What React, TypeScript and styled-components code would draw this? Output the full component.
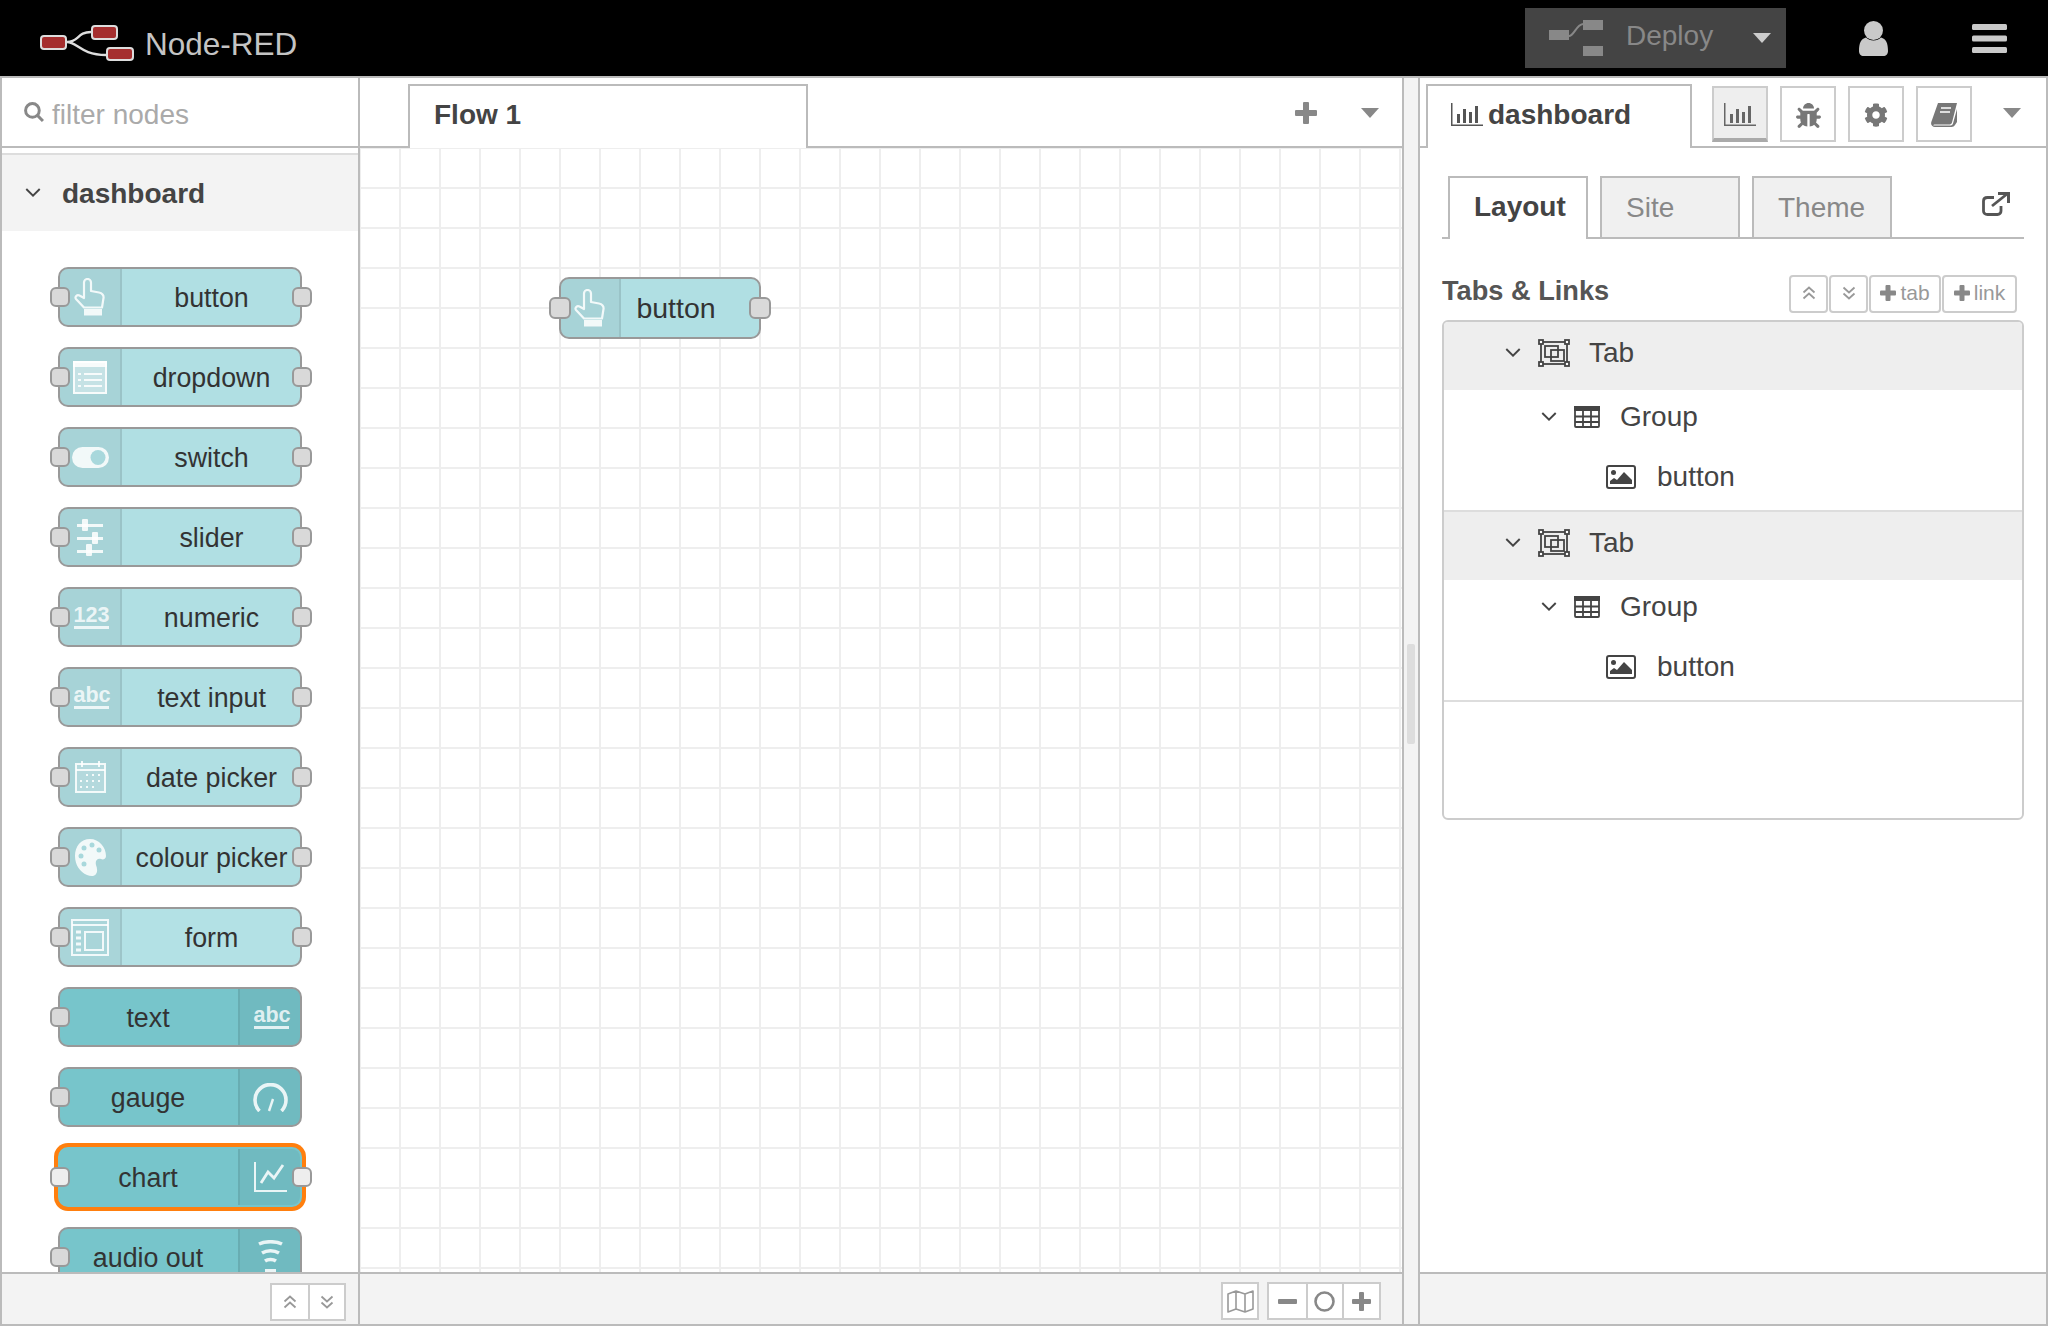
import React from 'react';
import styled, { createGlobalStyle } from 'styled-components';
import { FaBug, FaCog } from 'react-icons/fa';

const GlobalStyle = createGlobalStyle`
  html, body {
    margin: 0;
    padding: 0;
    background: #ffffff;
    font-family: "Liberation Sans", Arial, sans-serif;
  }
  * {
    box-sizing: border-box;
  }
  svg {
    display: block;
    flex: none;
  }
`;

const Page = styled.div`
  width: 2048px;
  height: 1326px;
  display: flex;
  flex-direction: column;
  overflow: hidden;
  color: #444;
`;

/* header */
const Header = styled.header`
  height: 76px;
  flex: none;
  display: flex;
  align-items: center;
  padding: 0 41px 0 40px;
  background: #000;
`;

const Brand = styled.div`
  display: flex;
  align-items: center;
  gap: 11px;
  padding-top: 10px;
  color: #c4c4c4;
  font-size: 31.5px;
`;

const BrandName = styled.span`
  padding-top: 2px;
`;

const DeployButton = styled.div`
  width: 261px;
  height: 60px;
  margin-left: auto;
  display: flex;
  align-items: center;
  padding: 0 15px 0 24px;
  background: #444;
  color: #888;
  font-size: 28px;
`;

const DeployLabel = styled.span`
  margin-left: 23px;
  padding-bottom: 4px;
`;

const DeployCaret = styled.span`
  margin-left: auto;
  width: 0;
  height: 0;
  border-left: 9px solid transparent;
  border-right: 9px solid transparent;
  border-top: 10px solid #ccc;
`;

const UserSlot = styled.div`
  margin-left: 73px;
  margin-right: 84px;
`;

/* workspace */
const Workspace = styled.div`
  flex: 1;
  min-height: 0;
  display: flex;
  border-top: 2px solid #bbb;
`;

const Sidebar = styled.aside`
  width: 360px;
  flex: none;
  display: flex;
  flex-direction: column;
  border-left: 2px solid #bbb;
  border-right: 2px solid #bbb;
`;

const FilterRow = styled.div`
  height: 70px;
  flex: none;
  display: flex;
  align-items: center;
  gap: 8px;
  padding-left: 22px;
  border-bottom: 2px solid #bbb;
  color: #aaa;
  font-size: 28px;
`;

const FilterText = styled.span`
  padding-top: 5px;
`;

const Palette = styled.div`
  flex: 1;
  min-height: 0;
  overflow: hidden;
  padding-top: 5px;
`;

const CategoryHeader = styled.div`
  height: 78px;
  display: flex;
  align-items: center;
  gap: 21px;
  padding-left: 23px;
  background: #f3f3f3;
  border-top: 2px solid #ddd;
  color: #444;
  font-size: 28px;
  font-weight: 700;
`;

const CategoryName = styled.span`
  padding-top: 2px;
`;

const NodeList = styled.div`
  display: flex;
  flex-direction: column;
  gap: 20px;
  padding: 36px 0 0 56px;
`;

const NodeBody = styled.div<{ $color: string; $selected?: boolean }>`
  position: relative;
  width: 244px;
  height: 60px;
  flex: none;
  display: flex;
  border: 2px solid ${(p) => (p.$selected ? p.$color : '#999')};
  border-radius: 10px;
  background: ${(p) => p.$color};
  box-shadow: ${(p) => (p.$selected ? '0 0 0 4px #ff7f0e' : 'none')};
  color: #333;
`;

const IconCell = styled.div<{ $right?: boolean }>`
  width: 62px;
  flex: none;
  display: flex;
  align-items: center;
  justify-content: center;
  background: rgba(0, 0, 0, 0.05);
  color: rgba(255, 255, 255, 0.85);
  border-radius: ${(p) => (p.$right ? '0 8px 8px 0' : '8px 0 0 8px')};
  ${(p) =>
    p.$right
      ? 'border-left: 2px solid rgba(0, 0, 0, 0.08);'
      : 'border-right: 2px solid rgba(0, 0, 0, 0.08);'}
`;

const NodeLabel = styled.div<{ $iconRight?: boolean }>`
  flex: 1;
  display: flex;
  align-items: center;
  justify-content: center;
  padding: 3px ${(p) => (p.$iconRight ? '2px' : '0')} 0 ${(p) => (p.$iconRight ? '0' : '1px')};
  font-size: 26.8px;
  white-space: nowrap;
`;

const Port = styled.span<{ $right?: boolean; $light?: boolean }>`
  position: absolute;
  top: 18px;
  ${(p) => (p.$right ? 'right: -12px;' : 'left: -10px;')}
  width: 20px;
  height: 20px;
  border: 2px solid #999;
  border-radius: 6px;
  background: ${(p) => (p.$light ? '#eeeeee' : '#d9d9d9')};
`;

const WordIcon = styled.span`
  display: block;
  width: 35px;
  margin-left: 2px;
  padding-bottom: 2px;
  border-bottom: 3px solid rgba(255, 255, 255, 0.8);
  color: rgba(255, 255, 255, 0.8);
  font-size: 21.5px;
  font-weight: 700;
  line-height: 18px;
  text-align: center;
`;

const SidebarFooter = styled.div`
  height: 54px;
  flex: none;
  display: flex;
  justify-content: flex-end;
  padding: 9px 12px 0 0;
  background: #f3f3f3;
  border-top: 2px solid #bbb;
  border-bottom: 2px solid #bbb;
`;

const ButtonGroup = styled.div<{ $count: number }>`
  width: ${(p) => p.$count * 38}px;
  height: 38px;
  display: grid;
  grid-template-columns: repeat(${(p) => p.$count}, 1fr);
  background: #fff;
  border: 2px solid #ccc;
`;

const GroupCell = styled.div`
  display: flex;
  align-items: center;
  justify-content: center;
  color: #888;
  & + & {
    border-left: 2px solid #ccc;
  }
`;

/* flow column */
const FlowColumn = styled.main`
  width: 1044px;
  flex: none;
  display: flex;
  flex-direction: column;
  border-right: 2px solid #bbb;
`;

const TabBar = styled.div`
  height: 70px;
  flex: none;
  display: flex;
  align-items: flex-end;
  border-bottom: 2px solid #bbb;
`;

const FlowTabBar = styled(TabBar)`
  padding: 0 17px 0 48px;
`;

const WorkTab = styled.div<{ $width: number }>`
  position: relative;
  width: ${(p) => p.$width}px;
  height: 64px;
  margin-bottom: -2px;
  display: flex;
  align-items: center;
  padding-bottom: 5px;
  background: #fff;
  border: 2px solid #bbb;
  border-bottom: none;
  color: #444;
  font-size: 28px;
  font-weight: 700;
`;

const FlowTabTitle = styled.span`
  padding-left: 24px;
`;

const BarAction = styled.div`
  width: 30px;
  height: 66px;
  display: flex;
  align-items: center;
  justify-content: center;
  color: #888;
`;

const PlusAction = styled(BarAction)`
  margin-left: auto;
  margin-right: 34px;
`;

const SmallCaret = styled.span`
  width: 0;
  height: 0;
  border-left: 9px solid transparent;
  border-right: 9px solid transparent;
  border-top: 10px solid #888;
`;

const Canvas = styled.div`
  position: relative;
  flex: 1;
  min-height: 0;
  overflow: hidden;
  background-color: #fff;
  background-image: linear-gradient(to right, #eee 2px, transparent 2px),
    linear-gradient(to bottom, #eee 2px, transparent 2px);
  background-size: 40px 40px;
  background-position: -1px -1px;
`;

const FlowNode = styled(NodeBody)`
  position: absolute;
  left: 199px;
  top: 129px;
  width: 202px;
  height: 62px;
`;

const FlowIconCell = styled(IconCell)`
  width: 60px;
`;

const FlowPort = styled(Port)`
  width: 22px;
  height: 22px;
  ${(p) => (p.$right ? 'right: -12px;' : 'left: -12px;')}
`;

const FlowLabel = styled(NodeLabel)`
  font-size: 28.5px;
  padding: 1px 28px 0 0;
`;

const FlowFooter = styled.div`
  height: 54px;
  flex: none;
  display: flex;
  justify-content: flex-end;
  gap: 8px;
  padding: 8px 21px 0 0;
  background: #f3f3f3;
  border-top: 2px solid #bbb;
  border-bottom: 2px solid #bbb;
`;

/* separator */
const Separator = styled.div`
  width: 14px;
  flex: none;
  display: flex;
  align-items: center;
  justify-content: center;
  padding-bottom: 14px;
  background: #f3f3f3;
  border-bottom: 2px solid #bbb;
`;

const SeparatorGrip = styled.span`
  width: 8px;
  height: 100px;
  background: #ddd;
  border-radius: 2px;
`;

/* right panel */
const RightPanel = styled.section`
  flex: 1;
  min-width: 0;
  display: flex;
  flex-direction: column;
  border-left: 2px solid #bbb;
  border-right: 2px solid #bbb;
`;

const InfoTabBar = styled(TabBar)`
  padding: 0 19px 0 6px;
`;

const DashboardTabTitle = styled.div`
  display: flex;
  align-items: center;
  gap: 5px;
  padding-left: 23px;
`;

const SideButtons = styled.div`
  align-self: flex-start;
  display: flex;
  gap: 12px;
  margin: 8px 0 0 20px;
`;

const SideButton = styled.div<{ $active?: boolean }>`
  width: 56px;
  height: 56px;
  display: flex;
  align-items: center;
  justify-content: center;
  padding-top: 2px;
  background: ${(p) => (p.$active ? '#eee' : '#fff')};
  border: 2px solid #ccc;
  border-bottom: ${(p) => (p.$active ? '4px solid #aaa' : '2px solid #ccc')};
  color: #777;
`;

const InfoCaret = styled(BarAction)`
  margin-left: auto;
`;

const PanelBody = styled.div`
  flex: 1;
  min-height: 0;
  padding: 28px 22px 0 22px;
`;

const SubTabs = styled.div`
  height: 63px;
  display: flex;
  align-items: flex-end;
  gap: 12px;
  padding: 0 14px 0 6px;
  border-bottom: 2px solid #bbb;
`;

const SubTab = styled.div<{ $active?: boolean }>`
  width: 140px;
  height: ${(p) => (p.$active ? '63px' : '61px')};
  margin-bottom: ${(p) => (p.$active ? '-2px' : '0')};
  display: flex;
  align-items: center;
  padding: 0 0 ${(p) => (p.$active ? '4px' : '0')} 24px;
  background: ${(p) => (p.$active ? '#fff' : '#f0f0f0')};
  border: 2px solid #bbb;
  border-bottom: none;
  color: ${(p) => (p.$active ? '#444' : '#888')};
  font-size: 28px;
  font-weight: ${(p) => (p.$active ? 700 : 400)};
`;

const ExternalLink = styled.div`
  align-self: flex-start;
  margin: 16px 0 0 auto;
  color: #555;
`;

const SectionHead = styled.div`
  height: 38px;
  margin-top: 36px;
  display: flex;
  align-items: center;
  gap: 1px;
  padding-right: 7px;
`;

const SectionTitle = styled.div`
  margin-right: auto;
  padding-bottom: 6px;
  color: #555;
  font-size: 27.2px;
  font-weight: 700;
`;

const ToolButton = styled.div<{ $width: number }>`
  width: ${(p) => p.$width}px;
  height: 38px;
  display: flex;
  align-items: center;
  justify-content: center;
  gap: 4px;
  padding-bottom: 2px;
  background: #fff;
  border: 2px solid #ccc;
  border-radius: 4px;
  color: #999;
  font-size: 21px;
`;

const TreeBox = styled.div`
  width: 582px;
  height: 500px;
  margin-top: 7px;
  overflow: hidden;
  border: 2px solid #ccc;
  border-radius: 6px;
`;

const TreeItem = styled.div`
  border-bottom: 2px solid #ddd;
`;

const TreeRow = styled.div<{ $indent: number; $height: number; $gap: number; $shaded?: boolean }>`
  height: ${(p) => p.$height}px;
  display: flex;
  align-items: center;
  padding-left: ${(p) => p.$indent}px;
  padding-bottom: ${(p) => (p.$shaded ? '7px' : '0')};
  background: ${(p) => (p.$shaded ? '#eee' : 'transparent')};
  color: #444;
  font-size: 28px;
  & > span {
    margin-left: ${(p) => p.$gap}px;
  }
`;

const TreeChevron = styled.div`
  margin-right: 17px;
  color: #444;
`;

/* drawn icons */
const LogoIcon = () => (
  <svg width="94" height="36" viewBox="0 0 94 36">
    <path d="M27 17c12 0 10-10 24-10M27 17c10 0 14 13 39 13" fill="none" stroke="#ddd" strokeWidth="2.400" />
    <rect x="1" y="11" width="25" height="13" rx="3" fill="#a52e2e" stroke="#ddd" strokeWidth="2" />
    <rect x="52" y="1" width="25" height="13" rx="3" fill="#a52e2e" stroke="#ddd" strokeWidth="2" />
    <rect x="67" y="23" width="26" height="12" rx="3" fill="#a52e2e" stroke="#ddd" strokeWidth="2" />
  </svg>
);

const DeployIcon = () => (
  <svg width="54" height="36" viewBox="0 0 54 36" fill="#888">
    <rect x="0" y="10" width="20" height="10" />
    <rect x="34" y="0" width="20" height="10" />
    <rect x="34" y="26" width="20" height="10" />
    <path d="M20 16c5 0 7-11 14-12" fill="none" stroke="#888" strokeWidth="2" />
  </svg>
);

const UserIcon = () => (
  <svg width="29" height="35" viewBox="0 0 29 35" fill="#c9c9c9">
    <circle cx="14.500" cy="9.500" r="9.500" />
    <path d="M0 30c0-8 2-12 7-13.500 2 2 4.500 3 7.500 3s5.500-1 7.500-3c5 1.500 7 5.500 7 13.500 0 3-2 5-4.500 5h-20C2 35 0 33 0 30z" />
  </svg>
);

const MenuIcon = () => (
  <svg width="35" height="29" viewBox="0 0 35 29" fill="#c9c9c9">
    <rect width="35" height="6" rx="1.500" />
    <rect y="11.500" width="35" height="6" rx="1.500" />
    <rect y="23" width="35" height="6" rx="1.500" />
  </svg>
);

const SearchIcon = () => (
  <svg width="20" height="20" viewBox="0 0 19 19" fill="none" stroke="#888" strokeWidth="2.800">
    <circle cx="8" cy="8" r="6.500" />
    <path d="M12.500 12.500l5.500 5.500" />
  </svg>
);

const Chevron = ({ size = 16 }: { size?: number }) => (
  <svg width={size} height={size * 0.6} viewBox="0 0 16 10" fill="none" stroke="currentColor" strokeWidth="2">
    <path d="M1 1l7 7 7-7" />
  </svg>
);

const DoubleChevron = ({ up }: { up?: boolean }) => (
  <svg width="14" height="14" viewBox="0 0 14 14" fill="none" stroke="#999" strokeWidth="1.800">
    <path d={up ? 'M1.500 6.500L7 1.500l5.500 5M1.500 12.500L7 7.500l5.500 5' : 'M1.500 1.500L7 6.500l5.500-5M1.500 7.500L7 12.500l5.500-5'} />
  </svg>
);

const HandIcon = () => (
  <svg width="32" height="38" viewBox="0 0 32 38" fill="none" stroke="currentColor" strokeWidth="2.200">
    <path d="M10 4.500a3.500 3.500 0 0 1 7 0V13l8 1.500c3 .6 5 3 4.500 5.500L28 29.500H10L2 21c-1.500-2 1-5 3.500-3.500L10 20z" strokeLinejoin="round" />
    <path d="M10 31h18v6.500H10z" fill="currentColor" stroke="none" />
  </svg>
);

const DropdownIcon = () => (
  <svg width="34" height="33" viewBox="0 0 34 33" fill="none" stroke="currentColor" strokeWidth="2">
    <rect x="0" y="0" width="34" height="33" fill="rgba(255,255,255,.35)" stroke="none" />
    <rect x="0" y="0" width="34" height="6" fill="currentColor" stroke="none" />
    <rect x="1" y="1" width="32" height="31" />
    <path d="M5 13h3M11 13h18M5 19h3M11 19h18M5 25h3M11 25h18" />
  </svg>
);

const SwitchIcon = () => (
  <svg width="37" height="21" viewBox="0 0 37 21">
    <rect width="37" height="21" rx="10.500" fill="currentColor" />
    <circle cx="26" cy="10.500" r="7.500" fill="#a8d8dc" />
  </svg>
);

const SliderIcon = () => (
  <svg width="26" height="37" viewBox="0 0 26 37" fill="currentColor">
    <rect y="5" width="26" height="3" />
    <rect x="5" y="0" width="6" height="12" rx="1" />
    <rect y="18" width="26" height="3" />
    <rect x="15" y="13" width="6" height="12" rx="1" />
    <rect y="31" width="26" height="3" />
    <rect x="9" y="25" width="6" height="12" rx="1" />
  </svg>
);

const CalendarIcon = () => (
  <svg width="31" height="32" viewBox="0 0 31 32" fill="none" stroke="currentColor" strokeWidth="2">
    <rect x="1" y="3" width="29" height="28" fill="rgba(255,255,255,.15)" />
    <path d="M1 9h29M7 0v6M24 0v6" />
    <path d="M11 14h2M17 14h2M23 14h2M5 20h2M11 20h2M17 20h2M23 20h2M5 26h2M11 26h2M17 26h2" />
  </svg>
);

const PaletteIcon = () => (
  <svg width="31" height="37" viewBox="0 0 31 37">
    <path d="M15 0C24 0 31 8 31 17c0 3-3 4-5 3-4-1-6 2-5 6 1 3 2 6 0 9-2 3-6 2-9 1C5 33 0 26 0 17 0 7 6 0 15 0z" fill="currentColor" />
    <g fill="#a8d8dc">
      <circle cx="6" cy="17" r="2.500" />
      <circle cx="9" cy="9" r="2.500" />
      <circle cx="17" cy="6" r="2.500" />
      <circle cx="24" cy="11" r="2.500" />
      <circle cx="9" cy="25" r="2.500" />
    </g>
  </svg>
);

const FormIcon = () => (
  <svg width="38" height="37" viewBox="0 0 38 37" fill="none" stroke="currentColor" strokeWidth="2">
    <rect x="1" y="1" width="36" height="35" />
    <path d="M1 6h36" />
    <rect x="14" y="13" width="18" height="18" />
    <path d="M5 13h5M5 19h5M5 25h5M5 31h5" strokeWidth="3" />
  </svg>
);

const GaugeIcon = () => (
  <svg width="35" height="29" viewBox="0 0 35 29" fill="none" stroke="currentColor">
    <path d="M6.500 28A15.500 15.500 0 1 1 28.500 28" strokeWidth="3.600" />
    <path d="M16 28l4-12" strokeWidth="2.400" />
  </svg>
);

const ChartLineIcon = () => (
  <svg width="33" height="30" viewBox="0 0 33 30" fill="none" stroke="currentColor" strokeWidth="2">
    <path d="M1 0v29h32" />
    <path d="M7 21l7-11 6 6 9-13" strokeWidth="2.800" />
  </svg>
);

const AudioIcon = () => (
  <svg width="25" height="34" viewBox="0 0 25 34" fill="none" stroke="currentColor" strokeWidth="3.600">
    <path d="M1 4c6-3 17-3 23 0M4 13c5-3 12-3 17 0M7 21c3-2 8-2 11 0" />
    <rect x="7" y="29" width="11" height="5" fill="currentColor" stroke="none" />
  </svg>
);

const BarsIcon = ({ color }: { color: string }) => (
  <svg width="32" height="23" viewBox="0 0 32 23" fill={color}>
    <path d="M0 0h1.500v21.500H32V23H0z" />
    <rect x="6" y="11" width="3" height="9" />
    <rect x="12" y="6" width="3" height="14" />
    <rect x="18" y="9" width="3" height="11" />
    <rect x="24" y="3" width="3" height="17" />
  </svg>
);

const BookIcon = () => (
  <svg width="26" height="24" viewBox="0 0 26 24" fill="currentColor">
    <path d="M7 0h19l-5 19.500c-.4 1.500-1.500 2-3 2H3.500c-1 0-1.400.6-1 1H19c1.500 0 2.500-.6 3-2L26 6v13l-2 3c-.7 1.300-2 2-3.500 2H4c-3 0-4.500-2.500-3.700-5z" />
    <path d="M10 5h10M9 9h10" stroke="#fff" strokeWidth="1.600" />
  </svg>
);

const ExternalIcon = () => (
  <svg width="28" height="24" viewBox="0 0 28 24" fill="none" stroke="currentColor" strokeWidth="2.800">
    <path d="M19 14v5c0 2-1.500 3.500-3.500 3.500h-10C3 22.500 1.500 21 1.500 19V9c0-2 1.500-3.500 4-3.500H12" />
    <path d="M10 14L25 2" />
    <path d="M16 1.500h10.500V11" strokeWidth="3" />
  </svg>
);

const PlusIcon = ({ size, weight, color }: { size: number; weight: number; color: string }) => (
  <svg width={size} height={size} viewBox={`0 0 ${size} ${size}`} fill={color}>
    <rect y={(size - weight) / 2} width={size} height={weight} rx="1" />
    <rect x={(size - weight) / 2} width={weight} height={size} rx="1" />
  </svg>
);

const MinusIcon = () => (
  <svg width="19" height="5" viewBox="0 0 19 5" fill="#888">
    <rect width="19" height="5" rx="1" />
  </svg>
);

const RingIcon = () => (
  <svg width="21" height="21" viewBox="0 0 21 21" fill="none" stroke="#888" strokeWidth="2.600">
    <circle cx="10.500" cy="10.500" r="9" />
  </svg>
);

const MapIcon = () => (
  <svg width="27" height="23" viewBox="0 0 27 23" fill="none" stroke="#999" strokeWidth="1.600">
    <path d="M1 4l8-3 9 3 8-3v18l-8 3-9-3-8 3zM9 1v18M18 4v18" strokeLinejoin="round" />
  </svg>
);

const ObjectGroupIcon = () => (
  <svg width="32" height="28" viewBox="0 0 32 28" fill="none" stroke="#444" strokeWidth="1.800">
    <rect x="3" y="3" width="26" height="22" />
    <rect x="1" y="1" width="4" height="4" fill="#fff" />
    <rect x="27" y="1" width="4" height="4" fill="#fff" />
    <rect x="1" y="23" width="4" height="4" fill="#fff" />
    <rect x="27" y="23" width="4" height="4" fill="#fff" />
    <rect x="7" y="7" width="13" height="11" />
    <rect x="13" y="11" width="13" height="11" />
  </svg>
);

const TableIcon = () => (
  <svg width="26" height="22" viewBox="0 0 26 22" fill="none" stroke="#444" strokeWidth="1.800">
    <rect x="1" y="1" width="24" height="20" rx="1" />
    <rect x="0" y="0" width="26" height="5" fill="#444" stroke="none" />
    <path d="M9 5v16M17 5v16M1 10.500h24M1 16h24" />
  </svg>
);

const PictureIcon = () => (
  <svg width="30" height="24" viewBox="0 0 30 24" fill="none" stroke="#444" strokeWidth="2">
    <rect x="1" y="1" width="28" height="22" rx="2" />
    <circle cx="7.500" cy="7.500" r="2.500" fill="#444" stroke="none" />
    <path d="M4 19v-3l4-3 3 2 7-8 8 8v4z" fill="#444" stroke="none" />
  </svg>
);

type PaletteEntry = {
  label: string;
  color: string;
  icon: React.ReactNode;
  output?: boolean;
  selected?: boolean;
};

const light = '#b0dfe3';
const dark = '#77c5cb';

const entries: PaletteEntry[] = [
  { label: 'button', color: light, icon: <HandIcon />, output: true },
  { label: 'dropdown', color: light, icon: <DropdownIcon />, output: true },
  { label: 'switch', color: light, icon: <SwitchIcon />, output: true },
  { label: 'slider', color: light, icon: <SliderIcon />, output: true },
  { label: 'numeric', color: light, icon: <WordIcon>123</WordIcon>, output: true },
  { label: 'text input', color: light, icon: <WordIcon>abc</WordIcon>, output: true },
  { label: 'date picker', color: light, icon: <CalendarIcon />, output: true },
  { label: 'colour picker', color: light, icon: <PaletteIcon />, output: true },
  { label: 'form', color: '#b3e1e5', icon: <FormIcon />, output: true },
  { label: 'text', color: dark, icon: <WordIcon>abc</WordIcon> },
  { label: 'gauge', color: dark, icon: <GaugeIcon /> },
  { label: 'chart', color: dark, icon: <ChartLineIcon />, output: true, selected: true },
  { label: 'audio out', color: dark, icon: <AudioIcon /> },
];

const PaletteNode = ({ entry }: { entry: PaletteEntry }) => {
  const iconRight = entry.color === dark;
  return (
    <NodeBody $color={entry.color} $selected={entry.selected}>
      {!iconRight && <IconCell>{entry.icon}</IconCell>}
      <NodeLabel $iconRight={iconRight}>{entry.label}</NodeLabel>
      {iconRight && <IconCell $right>{entry.icon}</IconCell>}
      <Port $light={entry.selected} />
      {entry.output && <Port $right $light={entry.selected} />}
    </NodeBody>
  );
};

const TabTree = () => (
  <TreeItem>
    <TreeRow $indent={61} $height={68} $gap={19} $shaded>
      <TreeChevron><Chevron /></TreeChevron>
      <ObjectGroupIcon />
      <span>Tab</span>
    </TreeRow>
    <TreeRow $indent={97} $height={54} $gap={20}>
      <TreeChevron><Chevron /></TreeChevron>
      <TableIcon />
      <span>Group</span>
    </TreeRow>
    <TreeRow $indent={162} $height={66} $gap={21}>
      <PictureIcon />
      <span>button</span>
    </TreeRow>
  </TreeItem>
);

export default function App() {
  return (
    <Page>
      <GlobalStyle />
      <Header>
        <Brand>
          <LogoIcon />
          <BrandName>Node-RED</BrandName>
        </Brand>
        <DeployButton>
          <DeployIcon />
          <DeployLabel>Deploy</DeployLabel>
          <DeployCaret />
        </DeployButton>
        <UserSlot>
          <UserIcon />
        </UserSlot>
        <MenuIcon />
      </Header>
      <Workspace>
        <Sidebar>
          <FilterRow>
            <SearchIcon />
            <FilterText>filter nodes</FilterText>
          </FilterRow>
          <Palette>
            <CategoryHeader>
              <Chevron />
              <CategoryName>dashboard</CategoryName>
            </CategoryHeader>
            <NodeList>
              {entries.map((entry) => (
                <PaletteNode key={entry.label} entry={entry} />
              ))}
            </NodeList>
          </Palette>
          <SidebarFooter>
            <ButtonGroup $count={2}>
              <GroupCell><DoubleChevron up /></GroupCell>
              <GroupCell><DoubleChevron /></GroupCell>
            </ButtonGroup>
          </SidebarFooter>
        </Sidebar>
        <FlowColumn>
          <FlowTabBar>
            <WorkTab $width={400}>
              <FlowTabTitle>Flow 1</FlowTabTitle>
            </WorkTab>
            <PlusAction>
              <PlusIcon size={22} weight={6} color="#888" />
            </PlusAction>
            <BarAction>
              <SmallCaret />
            </BarAction>
          </FlowTabBar>
          <Canvas>
            <FlowNode $color={light}>
              <FlowIconCell>
                <HandIcon />
              </FlowIconCell>
              <FlowLabel>button</FlowLabel>
              <FlowPort />
              <FlowPort $right />
            </FlowNode>
          </Canvas>
          <FlowFooter>
            <ButtonGroup $count={1}>
              <GroupCell><MapIcon /></GroupCell>
            </ButtonGroup>
            <ButtonGroup $count={3}>
              <GroupCell><MinusIcon /></GroupCell>
              <GroupCell><RingIcon /></GroupCell>
              <GroupCell><PlusIcon size={19} weight={5} color="#888" /></GroupCell>
            </ButtonGroup>
          </FlowFooter>
        </FlowColumn>
        <Separator>
          <SeparatorGrip />
        </Separator>
        <RightPanel>
          <InfoTabBar>
            <WorkTab $width={266}>
              <DashboardTabTitle>
                <BarsIcon color="#555" />
                dashboard
              </DashboardTabTitle>
            </WorkTab>
            <SideButtons>
              <SideButton $active><BarsIcon color="#666" /></SideButton>
              <SideButton><FaBug size={25} /></SideButton>
              <SideButton><FaCog size={24} /></SideButton>
              <SideButton><BookIcon /></SideButton>
            </SideButtons>
            <InfoCaret>
              <SmallCaret />
            </InfoCaret>
          </InfoTabBar>
          <PanelBody>
            <SubTabs>
              <SubTab $active>Layout</SubTab>
              <SubTab>Site</SubTab>
              <SubTab>Theme</SubTab>
              <ExternalLink>
                <ExternalIcon />
              </ExternalLink>
            </SubTabs>
            <SectionHead>
              <SectionTitle>Tabs &amp; Links</SectionTitle>
              <ToolButton $width={39}><DoubleChevron up /></ToolButton>
              <ToolButton $width={39}><DoubleChevron /></ToolButton>
              <ToolButton $width={72}><PlusIcon size={16} weight={5} color="#888" />tab</ToolButton>
              <ToolButton $width={75}><PlusIcon size={16} weight={5} color="#888" />link</ToolButton>
            </SectionHead>
            <TreeBox>
              <TabTree />
              <TabTree />
            </TreeBox>
          </PanelBody>
          <FlowFooter />
        </RightPanel>
      </Workspace>
    </Page>
  );
}
